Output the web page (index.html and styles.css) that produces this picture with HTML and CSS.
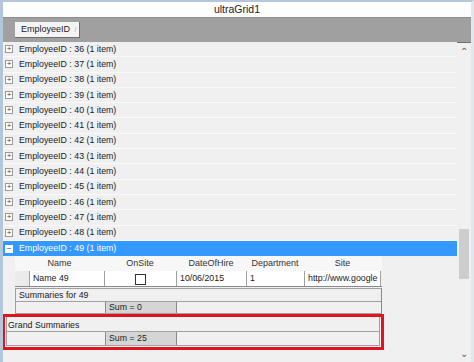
FILE: index.html
```html
<!DOCTYPE html>
<html lang="en">
<head>
<meta charset="UTF-8" />
<title>ultraGrid1</title>
<link rel="stylesheet" href="styles.css">
</head>
<body>
  <div class="grid">
    <div class="caption">ultraGrid1</div>

    <div class="groupby">
      <div class="gb-btn">EmployeeID <span class="sort">/</span></div>
    </div>

    <div class="main">
      <div class="rows">
        <div class="group-row"><span class="exp">+</span>EmployeeID : 36 (1 item)</div>
        <div class="group-row"><span class="exp">+</span>EmployeeID : 37 (1 item)</div>
        <div class="group-row"><span class="exp">+</span>EmployeeID : 38 (1 item)</div>
        <div class="group-row"><span class="exp">+</span>EmployeeID : 39 (1 item)</div>
        <div class="group-row"><span class="exp">+</span>EmployeeID : 40 (1 item)</div>
        <div class="group-row"><span class="exp">+</span>EmployeeID : 41 (1 item)</div>
        <div class="group-row"><span class="exp">+</span>EmployeeID : 42 (1 item)</div>
        <div class="group-row"><span class="exp">+</span>EmployeeID : 43 (1 item)</div>
        <div class="group-row"><span class="exp">+</span>EmployeeID : 44 (1 item)</div>
        <div class="group-row"><span class="exp">+</span>EmployeeID : 45 (1 item)</div>
        <div class="group-row"><span class="exp">+</span>EmployeeID : 46 (1 item)</div>
        <div class="group-row"><span class="exp">+</span>EmployeeID : 47 (1 item)</div>
        <div class="group-row"><span class="exp">+</span>EmployeeID : 48 (1 item)</div>
        <div class="group-row selected"><span class="exp">&minus;</span>EmployeeID : 49 (1 item)</div>

        <!-- bande enfant -->
        <div class="band">
          <div class="band-head">
            <div class="h-name">Name</div>
            <div class="c-onsite">OnSite</div>
            <div class="c-date">DateOfHire</div>
            <div class="c-dept">Department</div>
            <div class="c-site">Site</div>
          </div>
          <div class="band-row">
            <div class="selector"></div>
            <div class="cell c-name">Name 49</div>
            <div class="cell c-onsite center"><span class="check"></span></div>
            <div class="cell c-date">10/06/2015</div>
            <div class="cell c-dept">1</div>
            <div class="cell c-site">http://www.google</div>
          </div>
          <div class="summary">
            <div class="sum-label">Summaries for 49</div>
            <div class="sum-row">
              <div class="sum-pad"></div>
              <div class="sum-cell">Sum = 0</div>
              <div class="sum-rest"></div>
            </div>
          </div>
        </div>

        <div class="grand">
          <div class="grand-inner">
            <div class="sum-label">Grand Summaries</div>
            <div class="sum-row">
              <div class="sum-pad wide"></div>
              <div class="sum-cell">Sum = 25</div>
              <div class="sum-rest"></div>
            </div>
          </div>
        </div>
      </div>

      <div class="scrollbar">
        <div class="arrow">&#8963;</div>
        <div class="track">
          <div class="thumb"></div>
        </div>
        <div class="arrow">&#8964;</div>
      </div>
    </div>
  </div>
</body>
</html>
```

FILE: styles.css
```css
* {
  box-sizing: border-box;
}

html, body {
  margin: 0;
  padding: 0;
  background: #f0f0f0;
}

.grid {
  width: 474px;
  height: 362px;
  border-top: 2px solid #b4c6da;
  border-left: 3px solid #b4c6da;
  border-right: 3px solid #dfe7f0;
  font-family: "Liberation Sans", Arial, sans-serif;
  font-size: 8.8px;
  color: #1a1a1a;
  display: flex;
  flex-direction: column;
  overflow: hidden;
}

.caption {
  height: 15px;
  background: #fdfdfd;
  text-align: center;
  line-height: 14px;
  font-size: 10.5px;
  color: #222;
}

.groupby {
  height: 25px;
  background: #a0a0a0;
  border-top: 1px solid #8e8e8e;
  padding: 4px 0 0 12px;
}

.gb-btn {
  width: 65px;
  height: 16px;
  background: #f4f4f4;
  border-right: 1px solid #6f6f6f;
  border-bottom: 1px solid #6f6f6f;
  line-height: 15px;
  padding-left: 6px;
  font-size: 9px;
  color: #222;
  white-space: nowrap;
}

.sort {
  color: #a8a8a8;
  font-size: 7px;
  margin-left: 2px;
}

.main {
  flex: 1;
  display: flex;
}

.rows {
  flex: 1;
  display: flex;
  flex-direction: column;
}

.group-row {
  height: 15.3px;
  line-height: 15px;
  border-bottom: 1px solid #fafafa;
  display: flex;
  align-items: center;
  color: #1a1a1a;
}

.exp {
  width: 8px;
  height: 8px;
  border: 1px solid #9a9a9a;
  background: #fff;
  margin: 0 6px 0 2px;
  font-size: 8px;
  line-height: 6px;
  text-align: center;
  color: #444;
}

.group-row.selected {
  background: #3399ff;
  color: #fff;
  border-bottom: none;
}

.group-row.selected .exp {
  border-color: #fff;
  background: #fff;
  color: #3399ff;
  font-weight: bold;
}

.band {
  margin-left: 12px;
  width: 367px;
}

.band-head {
  display: flex;
  height: 15px;
  line-height: 15px;
  background: #f7f7f7;
  text-align: center;
  font-size: 9px;
  color: #333;
}

.h-name { width: 89px; }
.c-name { width: 75px; }
.c-onsite { width: 72px; }
.c-date { width: 70px; }
.c-dept { width: 58px; }
.c-site { width: 77px; }

.band-row {
  display: flex;
  height: 16px;
  border-bottom: 1px solid #8a8a8a;
}

.selector {
  width: 14px;
  background: #ebebeb;
}

.cell {
  background: #fff;
  border-left: 1px solid #a0a0a0;
  line-height: 15px;
  padding-left: 3px;
  white-space: nowrap;
  overflow: hidden;
}

.cell.c-site {
  border-right: 1px solid #a0a0a0;
}

.center {
  display: flex;
  justify-content: center;
  align-items: center;
  padding-left: 0;
}

.check {
  width: 11px;
  height: 11px;
  border: 1px solid #333;
  background: #fff;
  margin-top: 2px;
}

.summary {
  border: 1px solid #a0a0a0;
  border-right-color: #8a8a8a;
  margin-top: 1px;
}

.sum-label {
  height: 13px;
  line-height: 13px;
  padding-left: 3px;
  border-bottom: 1px solid #a0a0a0;
  color: #1a1a1a;
}

.sum-row {
  display: flex;
  height: 11px;
}

.sum-pad {
  width: 89px;
}

.sum-pad.wide {
  width: 98px;
}

.sum-cell {
  width: 72px;
  background: #d5d5d5;
  border-left: 1px solid #8a8a8a;
  border-right: 1px solid #8a8a8a;
  line-height: 11px;
  padding-left: 3px;
  color: #1a1a1a;
}

.sum-rest {
  flex: 1;
}

.grand {
  width: 382px;
  margin-left: -1px;
  border: 3px solid #e0141e;
  padding: 0 1px 1px 1px;
}

.grand-inner {
  border: 1px solid #a0a0a0;
  border-top: none;
}

.grand .sum-label {
  height: 15px;
  line-height: 16px;
  padding-left: 1px;
}

.grand .sum-row {
  height: 13px;
}

.grand .sum-cell {
  line-height: 13px;
}

.scrollbar {
  width: 14px;
  border-top: 1px solid #6f6f6f;
  background: #f0f0f0;
  display: flex;
  flex-direction: column;
}

.arrow {
  height: 17px;
  text-align: center;
  font-size: 10px;
  line-height: 17px;
  color: #606060;
}

.track {
  flex: 1;
  padding-top: 169px;
}

.thumb {
  width: 10px;
  height: 50px;
  margin-left: 2px;
  background: #cdcdcd;
}
```
